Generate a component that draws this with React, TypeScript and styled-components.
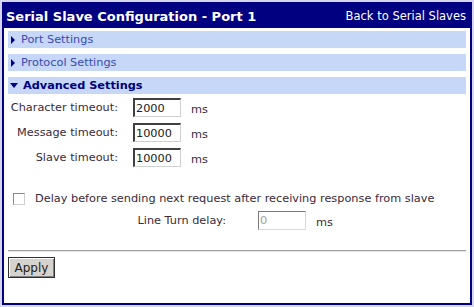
import React from "react";
import styled, { createGlobalStyle } from "styled-components";

const Global = createGlobalStyle`
  html, body { margin: 0; padding: 0; background: #ffffff; }
  body { font-family: "DejaVu Sans", Verdana, sans-serif; }
`;

const Page = styled.div`
  width: 474px;
  height: 307px;
  box-sizing: border-box;
  padding: 2px;
  background: #d6d6f2;
`;

const Frame = styled.div`
  box-sizing: border-box;
  width: 470px;
  height: 303px;
  border: 2px solid #000080;
  background: #ffffff;
  display: flex;
  flex-direction: column;
`;

const Header = styled.div`
  height: 24px;
  background: #000080;
  color: #ffffff;
  display: flex;
  align-items: center;
  justify-content: space-between;
  padding: 0 4px 0 2px;
  margin-top: -2px;
  padding-top: 2px;
`;

const Title = styled.div`
  font-weight: bold;
  font-size: 13px;
`;

const BackLink = styled.a`
  color: #ffffff;
  font-size: 11.5px;
  text-decoration: none;
`;

const Body = styled.div`
  padding: 3px 4px 0 4px;
  display: flex;
  flex-direction: column;
`;

const SectionBar = styled.div<{ $open?: boolean }>`
  height: 17px;
  background: #c6d7f7;
  display: flex;
  align-items: center;
  gap: 4px;
  padding-left: 2px;
  margin-bottom: 6px;
  color: ${(p) => (p.$open ? "#000080" : "#3a4ab4")};
  font-weight: ${(p) => (p.$open ? "bold" : "normal")};
  font-size: 11.3px;
`;

const Arrow = styled.svg<{ $w: number }>`
  width: ${(p) => p.$w}px;
  height: 8px;
  flex: none;
`;

const FormGrid = styled.div`
  display: grid;
  grid-template-columns: 125px 48px auto;
  row-gap: 6px;
  align-items: center;
  margin-top: -2px;
`;

const Label = styled.div`
  text-align: right;
  color: #3a2a3a;
  font-size: 11.3px;
  padding-right: 15px;
`;

const TextInput = styled.input<{ $disabled?: boolean }>`
  box-sizing: border-box;
  width: 48px;
  height: 19px;
  margin: 0;
  padding: 0 1px;
  font-family: "DejaVu Sans", Verdana, sans-serif;
  font-size: 11.3px;
  color: ${(p) => (p.$disabled ? "#a0a0a0" : "#202020")};
  background: #ffffff;
  border-style: solid;
  border-width: ${(p) => (p.$disabled ? "1px" : "2px 1px 1px 2px")};
  border-color: ${(p) =>
    p.$disabled ? "#7a7a7a #d8d8d8 #d8d8d8 #7a7a7a" : "#404040 #d0d0d0 #d0d0d0 #404040"};
  outline: none;
`;

const Unit = styled.div`
  color: #3a2a3a;
  font-size: 11.3px;
  padding-left: 10px;
  padding-top: 3px;
`;

const CheckRow = styled.label`
  display: flex;
  align-items: center;
  gap: 10px;
  margin-top: 25px;
  padding-left: 5px;
  color: #3a2a3a;
  font-size: 11.3px;
`;

const Check = styled.span`
  box-sizing: border-box;
  width: 12px;
  height: 12px;
  border: 1px solid #8a8a8a;
  border-right-color: #d0d0d0;
  border-bottom-color: #d0d0d0;
  background: #ffffff;
`;

const TurnRow = styled.div`
  display: grid;
  grid-template-columns: 250px 48px auto;
  align-items: center;
  margin-top: 6px;
`;

const TurnLabel = styled.div`
  text-align: right;
  color: #3a2a3a;
  font-size: 11.3px;
  padding-right: 32px;
`;

const Rule = styled.hr`
  margin: 20px 0 5px 0;
  border: none;
  border-top: 1px solid #a0a0a0;
  border-bottom: 1px solid #e4e4e4;
  height: 0;
`;

const Button = styled.button`
  align-self: flex-start;
  box-sizing: border-box;
  width: 47px;
  height: 21px;
  font-family: "DejaVu Sans", Verdana, sans-serif;
  font-size: 12px;
  color: #202020;
  background: #d6d3ce;
  border: 1px solid #303030;
  box-shadow: inset 1px 1px #ffffff, inset -1px -1px #808080;
  padding: 0;
`;

const RightArrow = () => (
  <Arrow $w={7} viewBox="0 0 7 8">
    <polygon points="1,0 5,4 1,8" fill="#000080" />
  </Arrow>
);

const DownArrow = () => (
  <Arrow $w={9} viewBox="0 0 9 8">
    <polygon points="0,1 8,1 4,6" fill="#000080" />
  </Arrow>
);

const rows = [
  { label: "Character timeout:", value: "2000" },
  { label: "Message timeout:", value: "10000" },
  { label: "Slave timeout:", value: "10000" },
];

export default function App() {
  return (
    <>
      <Global />
      <Page>
        <Frame>
          <Header>
            <Title>Serial Slave Configuration - Port 1</Title>
            <BackLink href="#">Back to Serial Slaves</BackLink>
          </Header>
          <Body>
            <SectionBar>
              <RightArrow />
              Port Settings
            </SectionBar>
            <SectionBar>
              <RightArrow />
              Protocol Settings
            </SectionBar>
            <SectionBar $open>
              <DownArrow />
              Advanced Settings
            </SectionBar>
            <FormGrid>
              {rows.map((r) => (
                <React.Fragment key={r.label}>
                  <Label>{r.label}</Label>
                  <TextInput defaultValue={r.value} />
                  <Unit>ms</Unit>
                </React.Fragment>
              ))}
            </FormGrid>
            <CheckRow>
              <Check />
              Delay before sending next request after receiving response from slave
            </CheckRow>
            <TurnRow>
              <TurnLabel>Line Turn delay:</TurnLabel>
              <TextInput $disabled disabled defaultValue="0" />
              <Unit>ms</Unit>
            </TurnRow>
            <Rule />
            <Button>Apply</Button>
          </Body>
        </Frame>
      </Page>
    </>
  );
}
